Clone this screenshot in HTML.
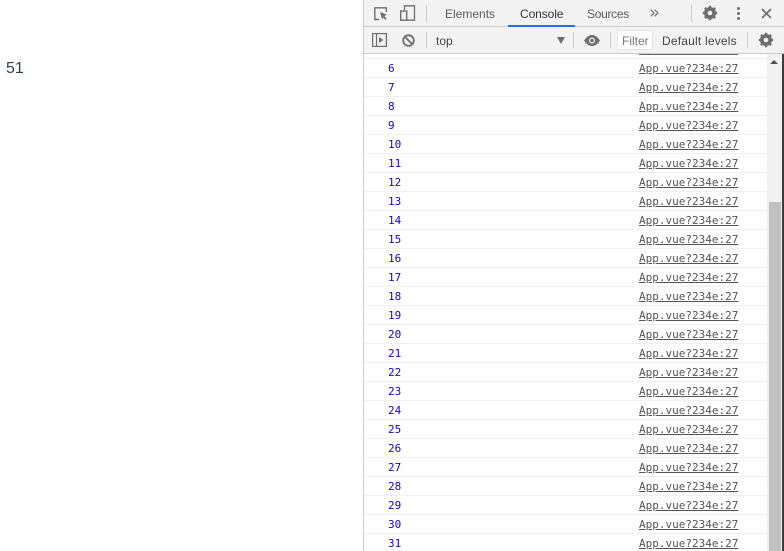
<!DOCTYPE html>
<html>
<head>
<meta charset="utf-8">
<style>
html,body{margin:0;padding:0;width:784px;height:551px;overflow:hidden;background:#fff}
body{position:relative;font-family:"Liberation Sans",sans-serif}
.a{position:absolute}
.t{position:absolute;font-size:12px;line-height:14px;color:#444;white-space:nowrap}
.r{position:absolute;left:364px;width:403px;height:19px;background:#fff;border-bottom:1px solid #f0f0f0;box-sizing:border-box;font-family:"DejaVu Sans Mono",monospace;font-size:11px;line-height:19px}
.r b{position:absolute;left:24px;top:0;font-weight:normal;color:#1c00cf}
.r u{position:absolute;left:275px;top:0;color:#545454;white-space:nowrap}
svg{position:absolute;overflow:visible}
</style>
</head>
<body>
<div class="a" style="left:6px;top:60px;font-size:16px;line-height:18px;color:#2c3e50">51</div>

<div class="a" style="left:363px;top:0;width:1px;height:551px;background:#ccc"></div>
<div class="a" style="left:364px;top:0;width:420px;height:53px;background:#f3f3f3"></div>
<div class="a" style="left:364px;top:26px;width:420px;height:1px;background:#ccc"></div>
<div class="a" style="left:364px;top:53px;width:420px;height:1px;background:#ccc"></div>
<div class="a" style="left:508px;top:25px;width:67px;height:2px;background:#1a73e8"></div>

<svg style="left:374px;top:7px" width="14" height="14" viewBox="0 0 14 14"><path d="M5 12.5H.8V.8h11.5V5" fill="none" stroke="#6e6e6e" stroke-width="1.4"/><path d="M6 5l7 2.8-2.7 1.2 2.4 2.5-1.2 1.2-2.4-2.5L8.400 13z" fill="#6e6e6e"/></svg>
<svg style="left:400px;top:5px" width="15" height="16" viewBox="0 0 15 16"><path d="M4.500 5V.8h10v14.400H6" fill="none" stroke="#6e6e6e" stroke-width="1.300"/><rect x=".7" y="6" width="6" height="9.200" fill="none" stroke="#6e6e6e" stroke-width="1.400"/></svg>
<div class="a" style="left:426px;top:5px;width:1px;height:17px;background:#ccc"></div>
<div class="t" style="left:445px;top:7px;color:#5a5a5a">Elements</div>
<div class="t" style="left:520px;top:7px;color:#333;letter-spacing:-.1px">Console</div>
<div class="t" style="left:587px;top:7px;color:#5a5a5a;letter-spacing:-.3px">Sources</div>
<svg style="left:650px;top:9px" width="9" height="8" viewBox="0 0 9 8"><path d="M.7.7L4 4 .7 7.300M4.700.7L8 4 4.700 7.300" fill="none" stroke="#6e6e6e" stroke-width="1.200"/></svg>
<div class="a" style="left:691px;top:5px;width:1px;height:17px;background:#ccc"></div>
<svg style="left:702px;top:5px" width="16" height="16" viewBox="0 0 16 16"><circle cx="8" cy="8" r="4.500" fill="none" stroke="#6e6e6e" stroke-width="3"/><path d="M8 .8v14.400M.8 8h14.400M2.900 2.900l10.200 10.200M13.100 2.900L2.900 13.100" stroke="#6e6e6e" stroke-width="2.400"/><circle cx="8" cy="8" r="2.300" fill="#f3f3f3"/></svg>
<div class="a" style="left:737px;top:7px;width:3px;height:3px;border-radius:2px;background:#6e6e6e"></div>
<div class="a" style="left:737px;top:12px;width:3px;height:3px;border-radius:2px;background:#6e6e6e"></div>
<div class="a" style="left:737px;top:17px;width:3px;height:3px;border-radius:2px;background:#6e6e6e"></div>
<svg style="left:761px;top:8px" width="11" height="11" viewBox="0 0 11 11"><path d="M1 1l9 9M10 1l-9 9" stroke="#6e6e6e" stroke-width="1.700"/></svg>

<svg style="left:372px;top:33px" width="15" height="14" viewBox="0 0 15 14"><rect x=".6" y=".6" width="13.800" height="12.800" fill="none" stroke="#6e6e6e" stroke-width="1.200"/><path d="M4.500 1v12" stroke="#6e6e6e" stroke-width="1.200"/><path d="M7 4l4.500 3L7 10z" fill="#6e6e6e"/></svg>
<svg style="left:402px;top:34px" width="13" height="13" viewBox="0 0 13 13"><circle cx="6.500" cy="6.500" r="5.300" fill="none" stroke="#6e6e6e" stroke-width="1.800"/><path d="M2.800 2.800l7.400 7.400" stroke="#6e6e6e" stroke-width="1.800"/></svg>
<div class="a" style="left:426px;top:32px;width:1px;height:16px;background:#ccc"></div>
<div class="t" style="left:436px;top:34px;color:#444">top</div>
<svg style="left:557px;top:37px" width="8" height="7" viewBox="0 0 8 7"><path d="M0 0h8L4 7z" fill="#6e6e6e"/></svg>
<div class="a" style="left:573px;top:32px;width:1px;height:16px;background:#ccc"></div>
<svg style="left:584px;top:35px" width="16" height="11" viewBox="0 0 16 11"><path d="M0 5.500C2.500 1.800 5 0 8 0s5.500 1.800 8 5.500C13.500 9.200 11 11 8 11S2.500 9.200 0 5.500z" fill="#6e6e6e"/><circle cx="8" cy="5.500" r="3" fill="#f3f3f3"/><circle cx="8" cy="5.500" r="1.800" fill="#6e6e6e"/></svg>
<div class="a" style="left:610px;top:32px;width:1px;height:16px;background:#ccc"></div>
<div class="a" style="left:617px;top:30px;width:36px;height:20px;background:#fff;border:1px solid #e4e4e4;box-sizing:border-box;overflow:hidden"><div class="t" style="left:4px;top:3px;color:#757575">Filter</div></div>
<div class="t" style="left:662px;top:34px;color:#444;letter-spacing:.2px">Default levels</div>
<div class="a" style="left:747px;top:32px;width:1px;height:16px;background:#ccc"></div>
<svg style="left:758px;top:32px" width="16" height="16" viewBox="0 0 16 16"><circle cx="8" cy="8" r="4.500" fill="none" stroke="#6e6e6e" stroke-width="3"/><path d="M8 .8v14.400M.8 8h14.400M2.900 2.900l10.200 10.200M13.100 2.900L2.900 13.100" stroke="#6e6e6e" stroke-width="2.400"/><circle cx="8" cy="8" r="2.300" fill="#f3f3f3"/></svg>

<div class="a" style="left:639px;top:54px;width:99px;height:1px;background:#666"></div>
<div class="a" style="left:364px;top:58px;width:403px;height:1px;background:#f0f0f0"></div>

<div class="r" style="top:59px"><b>6</b><u>App.vue?234e:27</u></div>
<div class="r" style="top:78px"><b>7</b><u>App.vue?234e:27</u></div>
<div class="r" style="top:97px"><b>8</b><u>App.vue?234e:27</u></div>
<div class="r" style="top:116px"><b>9</b><u>App.vue?234e:27</u></div>
<div class="r" style="top:135px"><b>10</b><u>App.vue?234e:27</u></div>
<div class="r" style="top:154px"><b>11</b><u>App.vue?234e:27</u></div>
<div class="r" style="top:173px"><b>12</b><u>App.vue?234e:27</u></div>
<div class="r" style="top:192px"><b>13</b><u>App.vue?234e:27</u></div>
<div class="r" style="top:211px"><b>14</b><u>App.vue?234e:27</u></div>
<div class="r" style="top:230px"><b>15</b><u>App.vue?234e:27</u></div>
<div class="r" style="top:249px"><b>16</b><u>App.vue?234e:27</u></div>
<div class="r" style="top:268px"><b>17</b><u>App.vue?234e:27</u></div>
<div class="r" style="top:287px"><b>18</b><u>App.vue?234e:27</u></div>
<div class="r" style="top:306px"><b>19</b><u>App.vue?234e:27</u></div>
<div class="r" style="top:325px"><b>20</b><u>App.vue?234e:27</u></div>
<div class="r" style="top:344px"><b>21</b><u>App.vue?234e:27</u></div>
<div class="r" style="top:363px"><b>22</b><u>App.vue?234e:27</u></div>
<div class="r" style="top:382px"><b>23</b><u>App.vue?234e:27</u></div>
<div class="r" style="top:401px"><b>24</b><u>App.vue?234e:27</u></div>
<div class="r" style="top:420px"><b>25</b><u>App.vue?234e:27</u></div>
<div class="r" style="top:439px"><b>26</b><u>App.vue?234e:27</u></div>
<div class="r" style="top:458px"><b>27</b><u>App.vue?234e:27</u></div>
<div class="r" style="top:477px"><b>28</b><u>App.vue?234e:27</u></div>
<div class="r" style="top:496px"><b>29</b><u>App.vue?234e:27</u></div>
<div class="r" style="top:515px"><b>30</b><u>App.vue?234e:27</u></div>
<div class="r" style="top:534px"><b>31</b><u>App.vue?234e:27</u></div>

<div class="a" style="left:767px;top:54px;width:15px;height:497px;background:#f1f1f1"></div>
<div class="a" style="left:782px;top:54px;width:2px;height:497px;background:#3c3c3c"></div>
<div class="a" style="left:769px;top:202px;width:12px;height:349px;background:#c1c1c1"></div>
<svg style="left:770px;top:60px" width="8" height="4" viewBox="0 0 8 4"><path d="M4 0L8 4H0z" fill="#505050"/></svg>
</body>
</html>
